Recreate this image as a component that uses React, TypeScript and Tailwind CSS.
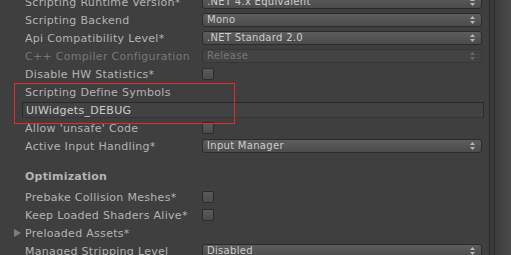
import React from "react";

const font = { fontFamily: '"DejaVu Sans", Verdana, sans-serif' };

function Arrows({ dim }: { dim?: boolean }) {
  return (
    <svg width="5" height="8" viewBox="0 0 5 8" className="shrink-0">
      <path d="M2.5 0 L5 3 L0 3 Z" fill={dim ? "#6a6a6a" : "#b8b8b8"} />
      <path d="M0 5 L5 5 L2.5 8 Z" fill={dim ? "#6a6a6a" : "#b8b8b8"} />
    </svg>
  );
}

function Popup({ value, disabled }: { value: string; disabled?: boolean }) {
  return (
    <div
      className={`flex h-[14px] flex-1 items-center justify-between rounded-[3px] border pl-[4px] pr-[6px] text-[10px] leading-none tracking-[0.3px] ${
        disabled
          ? "border-[#363636] bg-[#434343] text-[#787878]"
          : "border-[#2b2b2b] bg-gradient-to-b from-[#5d5d5d] to-[#4b4b4b] text-[#cdcdcd]"
      }`}
    >
      <span>{value}</span>
      <Arrows dim={disabled} />
    </div>
  );
}

function Toggle() {
  return (
    <div className="h-[12px] w-[12px] rounded-[2px] border border-[#2b2b2b] bg-gradient-to-b from-[#5a5a5a] to-[#4b4b4b]" />
  );
}

function Row({
  label,
  dim,
  children,
}: {
  label: string;
  dim?: boolean;
  children?: React.ReactNode;
}) {
  return (
    <div className="flex h-[18px] items-center pl-[25px] pr-[7px]">
      <div
        className={`w-[177px] shrink-0 text-[11px] leading-none tracking-[0.3px] ${
          dim ? "text-[#787878]" : "text-[#b4b4b4]"
        }`}
      >
        {label}
      </div>
      {children}
    </div>
  );
}

export default function App() {
  return (
    <div
      className="relative flex h-[255px] w-[511px] overflow-hidden bg-[#3f3f3f]"
      style={font}
    >
      <div className="relative flex-1">
        <div className="-mt-[7px] flex flex-col">
          <Row label="Scripting Runtime Version*">
            <Popup value=".NET 4.x Equivalent" />
          </Row>
          <Row label="Scripting Backend">
            <Popup value="Mono" />
          </Row>
          <Row label="Api Compatibility Level*">
            <Popup value=".NET Standard 2.0" />
          </Row>
          <Row label="C++ Compiler Configuration" dim>
            <Popup value="Release" disabled />
          </Row>
          <Row label="Disable HW Statistics*">
            <Toggle />
          </Row>
          <Row label="Scripting Define Symbols" />
          <div className="flex h-[18px] items-start pl-[22px] pr-[5px] pt-[1px]">
            <div className="flex h-[16px] flex-1 items-center border border-[#2a2a2a] border-b-[#353535] bg-[#424242] pl-[3px] text-[11px] leading-none tracking-[0.3px] text-[#cccccc]">
              UIWidgets_DEBUG
            </div>
          </div>
          <Row label="Allow 'unsafe' Code">
            <Toggle />
          </Row>
          <Row label="Active Input Handling*">
            <Popup value="Input Manager" />
          </Row>
          <div className="mt-[12px] flex h-[18px] items-center pl-[25px] text-[11px] font-bold leading-none tracking-[0.2px] text-[#b4b4b4]">
            Optimization
          </div>
          <div className="mt-[3px]" />
          <Row label="Prebake Collision Meshes*">
            <Toggle />
          </Row>
          <Row label="Keep Loaded Shaders Alive*">
            <Toggle />
          </Row>
          <div className="flex h-[18px] items-center pl-[14px]">
            <svg width="7" height="8" viewBox="0 0 7 8" className="mr-[4px]">
              <path d="M0 0 L7 4 L0 8 Z" fill="#7d7d7d" />
            </svg>
            <span className="text-[11px] leading-none tracking-[0.3px] text-[#b4b4b4]">
              Preloaded Assets*
            </span>
          </div>
          <Row label="Managed Stripping Level">
            <Popup value="Disabled" />
          </Row>
        </div>
        <div className="absolute left-[14px] top-[83px] h-[41px] w-[221px] border border-[#e52a2a]" />
      </div>
      <div className="flex w-[22px] shrink-0">
        <div className="w-[1px] bg-[#2c2c2c]" />
        <div className="w-[4px] bg-[#3a3a3a]" />
        <div className="w-[1px] bg-[#2c2c2c]" />
        <div className="flex-1 bg-gradient-to-r from-[#3c3c3c] to-[#4a4a4a]" />
      </div>
    </div>
  );
}
